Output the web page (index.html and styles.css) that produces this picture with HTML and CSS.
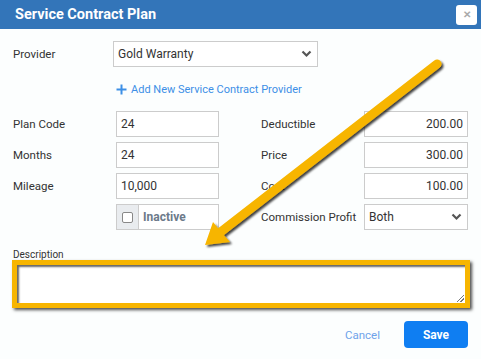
FILE: index.html
```html
<!DOCTYPE html>
<html>
<head>
<meta charset="utf-8">
<link rel="stylesheet" href="styles.css">
</head>
<body>
<div class="dialog">
  <div class="header">
    <span class="title">Service Contract Plan</span>
    <span class="close">&#x2715;</span>
  </div>
  <div class="body">
    <div class="provider-row">
      <span class="label">Provider</span>
      <div class="select provider-select">
        <span>Gold Warranty</span>
        <svg class="chev" width="11" height="8" viewBox="0 0 11 8"><path d="M1.5 1.5 L5.5 5.5 L9.5 1.5" fill="none" stroke="#555" stroke-width="2.2"/></svg>
      </div>
    </div>
    <div class="add-row">
      <svg class="plus" width="11" height="11" viewBox="0 0 11 11"><path d="M5.5 0.5 V10.5 M0.5 5.5 H10.5" stroke="#3d8fe6" stroke-width="2"/></svg>
      <span>Add New Service Contract Provider</span>
    </div>
    <div class="grid">
      <span class="label">Plan Code</span>
      <div class="input">24</div>
      <span class="label right">Deductible</span>
      <div class="input num">200.00</div>

      <span class="label">Months</span>
      <div class="input">24</div>
      <span class="label right">Price</span>
      <div class="input num">300.00</div>

      <span class="label">Mileage</span>
      <div class="input">10,000</div>
      <span class="label right">Cost</span>
      <div class="input num">100.00</div>

      <span class="label"></span>
      <div class="input check-group">
        <span class="addon"><span class="box"></span></span>
        <span class="check-text">Inactive</span>
      </div>
      <span class="label right">Commission Profit</span>
      <div class="select">
        <span>Both</span>
        <svg class="chev" width="11" height="8" viewBox="0 0 11 8"><path d="M1.5 1.5 L5.5 5.5 L9.5 1.5" fill="none" stroke="#555" stroke-width="2.2"/></svg>
      </div>
    </div>
    <div class="desc-label">Description</div>
    <div class="textarea"><span class="grip"></span></div>
    <div class="footer">
      <span class="cancel">Cancel</span>
      <span class="save">Save</span>
    </div>
  </div>
  <svg class="arrow" width="481" height="359" viewBox="0 0 481 359">
    <defs>
      <filter id="sh" x="-20%" y="-20%" width="140%" height="140%">
        <feDropShadow dx="2" dy="2" stdDeviation="1.2" flood-color="#000" flood-opacity="0.75"/>
      </filter>
    </defs>
    <g filter="url(#sh)">
      <line x1="437" y1="64" x2="218" y2="234" stroke="#f7b500" stroke-width="9" stroke-linecap="round"/>
      <path d="M205 245 L213 222 L221 232 L230 242 Z" fill="#f7b500"/>
    </g>
  </svg>
</div>
</body>
</html>
```

FILE: styles.css
```css
* { box-sizing: border-box; }
html, body { margin: 0; padding: 0; }
body {
  width: 481px;
  height: 359px;
  overflow: hidden;
  background: #fcfefe;
  font-family: Roboto, "Liberation Sans", sans-serif;
  color: #333;
}
.dialog { position: relative; width: 481px; height: 359px; }
.header {
  height: 29px;
  background: #3375b9;
  display: flex;
  align-items: center;
  justify-content: space-between;
  padding: 0 4px 0 15px;
}
.title { color: #fff; font-weight: 700; font-size: 14.5px; }
.close {
  width: 21px; height: 20px;
  background: #fff;
  border-radius: 3px;
  color: #aaa;
  font-size: 10px;
  font-weight: 700;
  display: flex; align-items: center; justify-content: center;
}
.body { padding: 12px 13px 0 13px; }
.label { font-size: 11.5px; color: #333; display: flex; align-items: center; }
.label.right { margin-left: 42px; }
.provider-row { display: flex; align-items: center; height: 26px; }
.provider-row .label { width: 100px; }
.select {
  height: 26px;
  border: 1px solid #ccc;
  background: #fff;
  display: flex; align-items: center; justify-content: space-between;
  padding: 0 5px 0 4px;
  font-size: 12px;
}
.provider-select { width: 205px; }
.add-row {
  display: flex; align-items: center; gap: 4px;
  margin: 14px 0 0 103px;
  height: 16px;
  color: #3d8fe6;
  font-size: 11px;
}
.grid {
  margin-top: 14px;
  display: grid;
  grid-template-columns: 103px 103px 145px 104px;
  grid-template-rows: 26px 26px 26px 26px;
  row-gap: 5px;
}
.input {
  height: 26px;
  border: 1px solid #ccc;
  background: #fff;
  font-size: 12px;
  display: flex; align-items: center;
  padding: 0 4px;
}
.num { justify-content: flex-end; }
.check-group { padding: 0; }
.addon {
  width: 22px; height: 100%;
  background: #e9ecef;
  border-right: 1px solid #ccc;
  display: flex; align-items: center; justify-content: center;
}
.box { width: 11px; height: 11px; border: 1px solid #888; border-radius: 2px; background: #fff; }
.check-text { font-weight: 700; color: #6c7a8a; padding-left: 4px; font-size: 12px; }
.desc-label { font-size: 10px; margin-top: 20px; height: 10px; line-height: 10px; }
.textarea {
  position: relative;
  margin: 0 -2px 0 -1px;
  height: 48px;
  border: 5px solid #f7b500;
  background: #fff;
  box-shadow: 2px 2px 3px rgba(0,0,0,0.7), inset 2px 2px 2px rgba(0,0,0,0.6);
}
.grip {
  position: absolute; right: 1px; bottom: 1px;
  width: 7px; height: 7px;
  background: linear-gradient(135deg, transparent 45%, #777 45%, #777 55%, transparent 55%, transparent 70%, #777 70%, #777 80%, transparent 80%);
}
.footer {
  display: flex; justify-content: flex-end; align-items: center;
  margin-top: 13px;
  gap: 24px;
}
.cancel { color: #6fa3ea; font-size: 11.5px; }
.save {
  width: 64px; height: 27px;
  background: #0f7ef2;
  color: #fff; font-weight: 700; font-size: 12px;
  border-radius: 4px;
  display: flex; align-items: center; justify-content: center;
}
.arrow { position: absolute; left: 0; top: 0; pointer-events: none; }
```
